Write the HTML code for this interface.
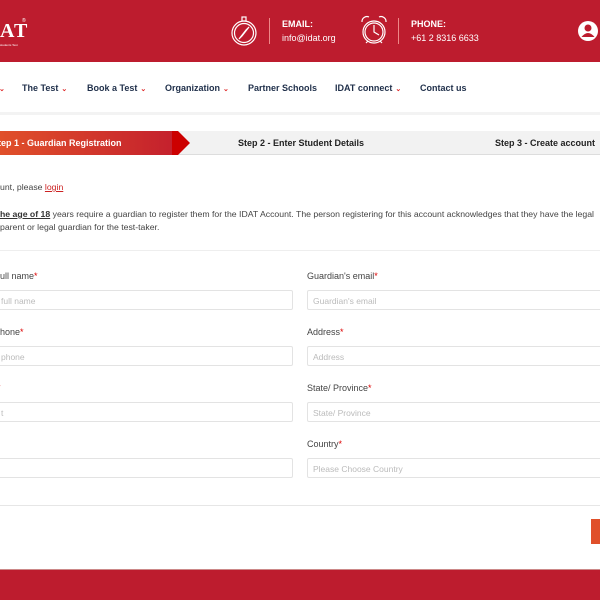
<!DOCTYPE html>
<html><head><style>
*{margin:0;padding:0;box-sizing:border-box}
body{width:600px;height:600px;overflow:hidden;background:#fff;font-family:"Liberation Sans",Arial,sans-serif;position:relative}
.a{position:absolute}
.hdr{left:0;top:0;width:600px;height:62px;background:#bd1c2e}
.w{color:#fff}
.nav{font-size:9px;font-weight:bold;color:#1f2f4a;top:83px}
.nav i{color:#d22;font-style:normal;font-size:7px;margin-left:3px}
.lbl{font-size:9px;color:#444}
.lbl b{color:#d00;font-weight:normal}
.inp{height:20px;border:1px solid #e3e3e3;border-radius:2px;font-size:8.5px;color:#bbb;padding:5px 5px}
</style></head><body>
<div class="a hdr"></div>
<div class="a w" style="left:0;top:20px;font-family:'Liberation Serif',serif;font-size:20px;font-weight:bold;letter-spacing:1px">AT</div>
<div class="a w" style="left:22px;top:18px;font-size:5px">®</div>
<div class="a w" style="left:0;top:43px;font-size:3px">students Test</div>
<svg class="a" style="left:230px;top:15px" width="30" height="32" viewBox="0 0 30 32" fill="none" stroke="#fff" stroke-width="1.2"><circle cx="14" cy="18" r="12"/><circle cx="14" cy="18" r="9.5"/><rect x="12" y="2" width="4" height="4"/><path d="M19 12 L12 21 L9 24 L16 15 Z"/></svg>
<div class="a" style="left:269px;top:18px;width:1px;height:26px;background:#e88"></div>
<div class="a w" style="left:282px;top:19px;font-size:9px;font-weight:bold">EMAIL:</div>
<div class="a w" style="left:282px;top:33px;font-size:9px">info@idat.org</div>
<svg class="a" style="left:359px;top:14px" width="30" height="32" viewBox="0 0 30 32" fill="none" stroke="#fff" stroke-width="1.2"><circle cx="15" cy="18" r="11"/><circle cx="15" cy="18" r="9"/><path d="M15 11 V18 L20 21"/><path d="M3 8 A5 5 0 0 1 10 3"/><path d="M27 8 A5 5 0 0 0 20 3"/><path d="M7 29 L9 27 M23 29 L21 27"/></svg>
<div class="a" style="left:398px;top:18px;width:1px;height:26px;background:#e88"></div>
<div class="a w" style="left:411px;top:19px;font-size:9px;font-weight:bold">PHONE:</div>
<div class="a w" style="left:411px;top:33px;font-size:9px">+61 2 8316 6633</div>
<svg class="a" style="left:577px;top:20px" width="22" height="22" viewBox="0 0 22 22"><circle cx="11" cy="11" r="10" fill="#fff"/><circle cx="11" cy="8" r="3.5" fill="#bd1c2e"/><path d="M4.5 17 Q11 9 17.5 17" fill="#bd1c2e"/></svg>
<div class="a nav" style="left:-4px"><i>⌄</i></div>
<div class="a nav" style="left:22px">The Test<i>⌄</i></div>
<div class="a nav" style="left:87px">Book a Test<i>⌄</i></div>
<div class="a nav" style="left:165px">Organization<i>⌄</i></div>
<div class="a nav" style="left:248px">Partner Schools</div>
<div class="a nav" style="left:335px">IDAT connect<i>⌄</i></div>
<div class="a nav" style="left:420px">Contact us</div>
<div class="a" style="left:0;top:112px;width:600px;height:3px;background:#f3f3f3"></div>
<div class="a" style="left:0;top:131px;width:600px;height:24px;background:#f2f2f2;border-bottom:1px solid #ddd"></div>
<div class="a" style="left:0;top:131px;width:176px;height:24px;background:linear-gradient(90deg,#e0502a,#c4202d)"></div>
<svg class="a" style="left:172px;top:131px" width="18" height="24"><polygon points="0,0 6,0 18,12 6,24 0,24" fill="#c00"/></svg>
<div class="a w" style="left:-2px;top:138px;font-size:9px;font-weight:bold">tep 1 - Guardian Registration</div>
<div class="a" style="left:238px;top:138px;font-size:9px;font-weight:bold;color:#222">Step 2 - Enter Student Details</div>
<div class="a" style="left:495px;top:138px;font-size:9px;font-weight:bold;color:#222">Step 3 - Create account</div>
<div class="a" style="left:0;top:182px;font-size:8.7px;color:#444">unt, please <span style="color:#c22;text-decoration:underline">login</span></div>
<div class="a" style="left:0;top:208px;font-size:8.7px;color:#444;line-height:13px;white-space:nowrap"><b style="text-decoration:underline;color:#333">he age of 18</b> years require a guardian to register them for the IDAT Account. The person registering for this account acknowledges that they have the legal<br>parent or legal guardian for the test-taker.</div>
<div class="a" style="left:0;top:250px;width:600px;height:1px;background:#eee"></div>
<div class="a lbl" style="left:0;top:271px">ull name<b>*</b></div>
<div class="a lbl" style="left:307px;top:271px">Guardian's email<b>*</b></div>
<div class="a inp" style="left:-5px;top:290px;width:298px">full name</div>
<div class="a inp" style="left:307px;top:290px;width:300px">Guardian's email</div>
<div class="a lbl" style="left:0;top:327px">hone<b>*</b></div>
<div class="a lbl" style="left:307px;top:327px">Address<b>*</b></div>
<div class="a inp" style="left:-5px;top:346px;width:298px">phone</div>
<div class="a inp" style="left:307px;top:346px;width:300px">Address</div>
<div class="a lbl" style="left:-3px;top:383px"><b>*</b></div>
<div class="a lbl" style="left:307px;top:383px">State/ Province<b>*</b></div>
<div class="a inp" style="left:-5px;top:402px;width:298px">t</div>
<div class="a inp" style="left:307px;top:402px;width:300px">State/ Province</div>
<div class="a lbl" style="left:307px;top:439px">Country<b>*</b></div>
<div class="a inp" style="left:-5px;top:458px;width:298px"></div>
<div class="a inp" style="left:307px;top:458px;width:300px">Please Choose Country</div>
<div class="a" style="left:0;top:505px;width:600px;height:1px;background:#e6e6e6"></div>
<div class="a" style="left:591px;top:519px;width:12px;height:25px;background:#e0502a"></div>
<div class="a" style="left:0;top:569px;width:600px;height:31px;background:#bd1c2e;border-top:1px solid #c88"></div>
</body></html>
